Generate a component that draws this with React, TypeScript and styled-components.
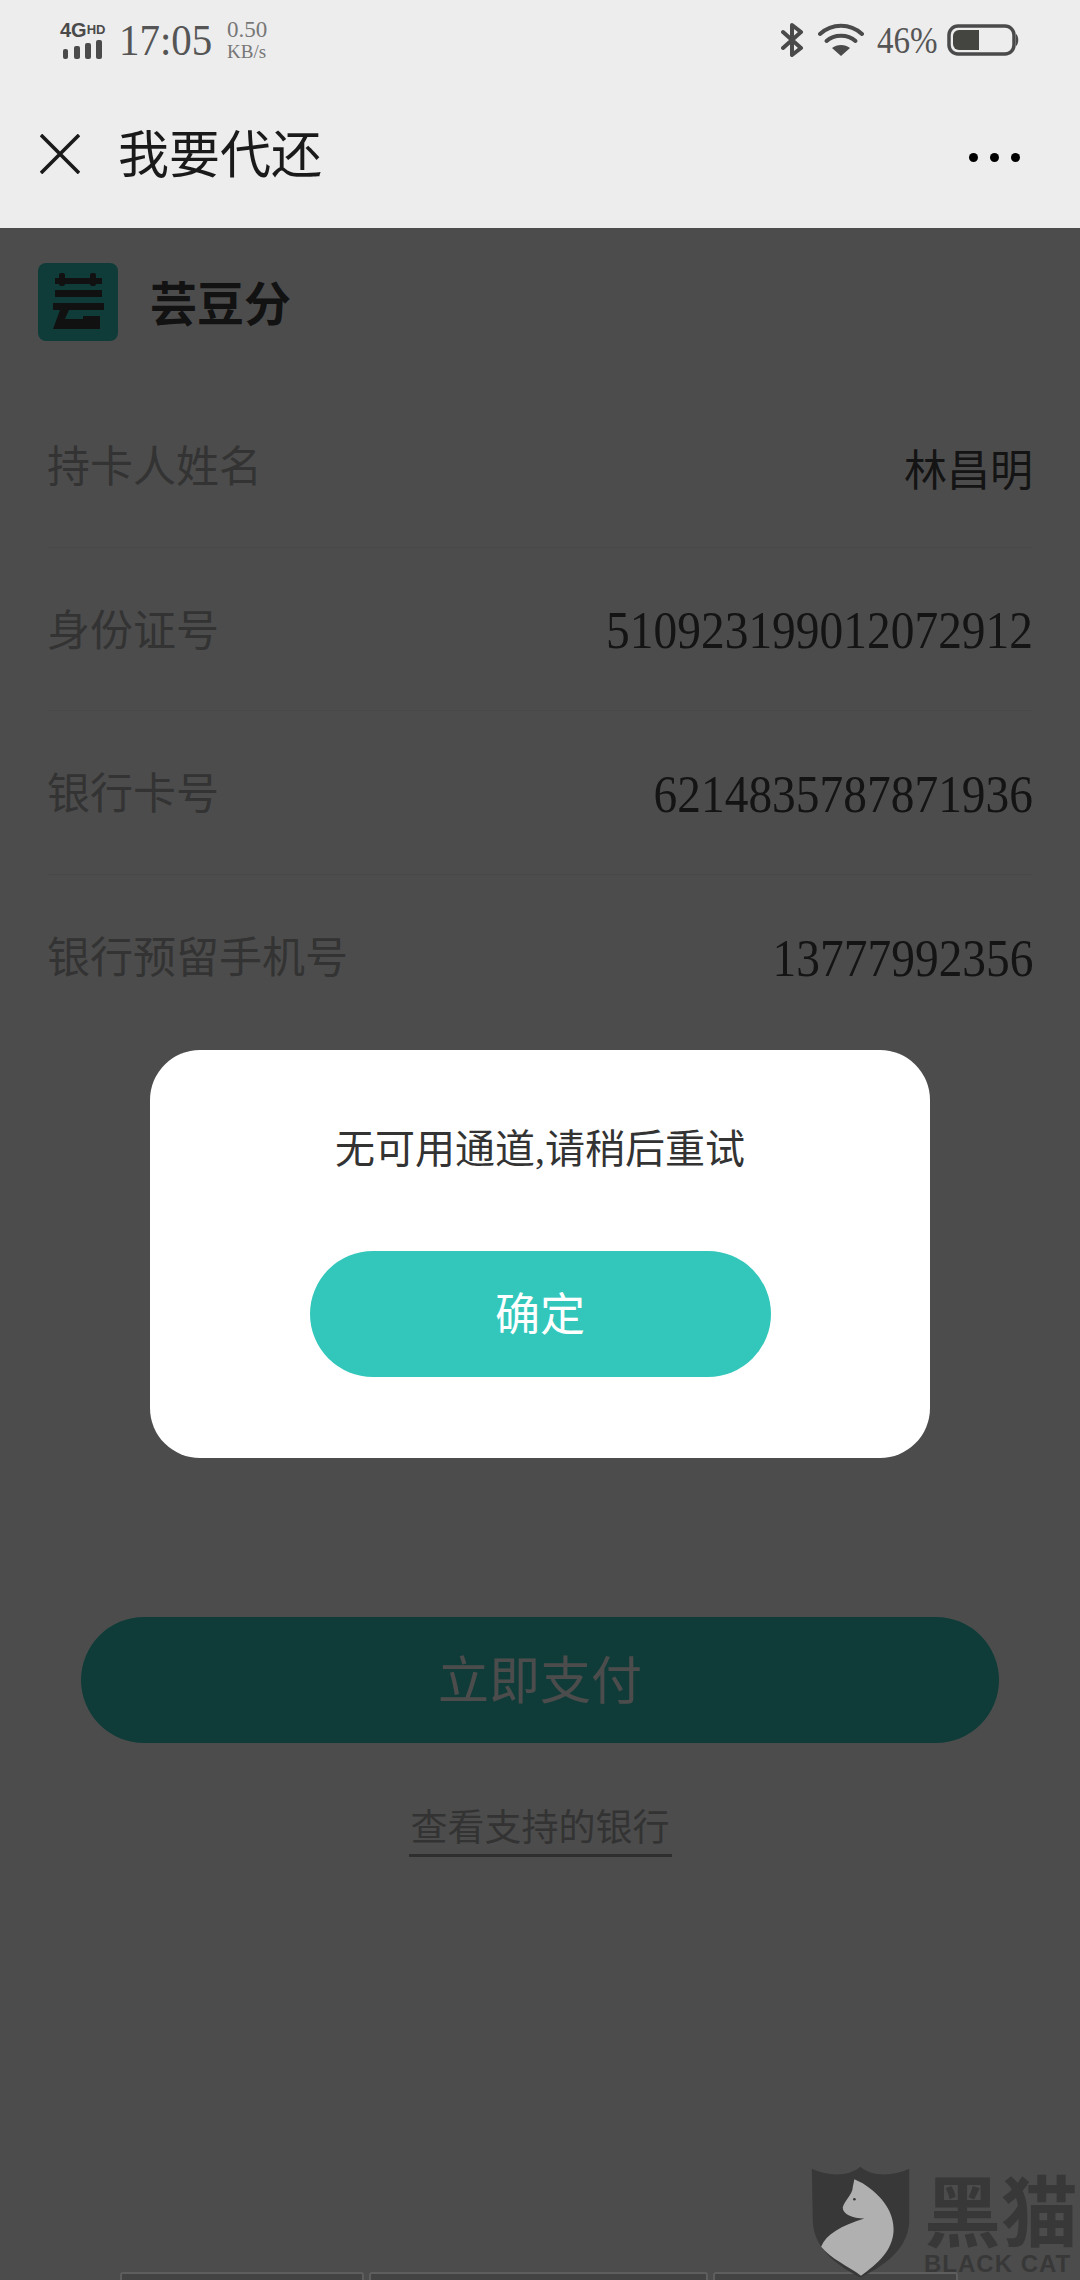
import styled, { createGlobalStyle } from "styled-components";

const SERIF = `"Liberation Serif", "Noto Sans CJK SC", serif`;
const SANS = `"Noto Sans CJK SC", "Noto Sans", sans-serif`;

const rows = [
  { label: "持卡人姓名", value: "林昌明", digits: false },
  { label: "身份证号", value: "510923199012072912", digits: true },
  { label: "银行卡号", value: "6214835787871936", digits: true },
  { label: "银行预留手机号", value: "13777992356", digits: true },
];

const App = () => {
  return (
    <S.Page>
      <GlobalStyle />
      <S.Top>
        <S.StatusBar>
          <S.StatusGroup>
            <S.Signal>
              <S.SignalText>
                4G<small>HD</small>
              </S.SignalText>
              <svg width="44" height="20" viewBox="0 0 42 20" fill="#4a4a4a">
                <rect x="2" y="10" width="5" height="10" rx="2" />
                <rect x="13" y="7" width="6" height="13" rx="2" />
                <rect x="24" y="4" width="6" height="16" rx="2" />
                <rect x="35" y="1" width="6" height="19" rx="2" />
              </svg>
            </S.Signal>
            <S.Time>17:05</S.Time>
            <S.Speed>
              <span>0.50</span>
              <small>KB/s</small>
            </S.Speed>
          </S.StatusGroup>
          <S.StatusGroup>
            <svg width="24" height="36" viewBox="0 0 24 36" fill="none" stroke="#4a4a4a" strokeWidth="4" strokeLinejoin="round" strokeLinecap="round">
              <path d="M2 10 L20 26 L11 33 V3 L20 10 L2 26" />
            </svg>
            <svg width="46" height="34" viewBox="0 0 46 34" fill="none" stroke="#4a4a4a" strokeWidth="4" strokeLinecap="round">
              <path d="M2 11 C14 0 32 0 44 11" />
              <path d="M8.5 18 C16 11 30 11 37.5 18" />
              <path d="M23 33 L14 25 C19 21 27 21 32 25 Z" fill="#4a4a4a" stroke="none" />
            </svg>
            <S.Battery>46%</S.Battery>
            <svg width="73" height="32" viewBox="0 0 73 32">
              <rect x="2" y="2" width="65" height="28" rx="9" fill="none" stroke="#4a4a4a" strokeWidth="3.5" />
              <path d="M6 12 a6 6 0 0 1 6 -6 H32 V26 H12 a6 6 0 0 1 -6 -6 Z" fill="#444440" />
              <path d="M69 10 C72 12 72 20 69 22 Z" fill="#4a4a4a" />
            </svg>
          </S.StatusGroup>
        </S.StatusBar>
        <S.NavBar>
          <svg width="40" height="40" viewBox="0 0 42 42" stroke="#1a1a1a" strokeWidth="3.8">
            <path d="M1 1 L41 41 M41 1 L1 41" />
          </svg>
          <S.NavTitle>我要代还</S.NavTitle>
          <S.Dots>
            <i />
            <i />
            <i />
          </S.Dots>
        </S.NavBar>
      </S.Top>

      <S.Content>
        <S.Brand>
          <svg width="80" height="78" viewBox="0 0 80 78">
            <rect width="80" height="78" rx="8" fill="#33c7bb" />
            <g fill="#3a3a3a">
              <rect x="17" y="15" width="47" height="6" />
              <rect x="21" y="10" width="6" height="13" rx="2" />
              <rect x="52" y="10" width="6" height="13" rx="2" />
              <rect x="17" y="27" width="47" height="7" />
              <rect x="15" y="40" width="51" height="7" />
              <path d="M22 47 H31 L27 56 H45 V53 H62 V66 H15 Z" />
            </g>
          </svg>
          <S.BrandName>芸豆分</S.BrandName>
        </S.Brand>

        <S.Form>
          {rows.map((row) => (
            <S.Row key={row.label}>
              <S.Label>{row.label}</S.Label>
              <S.Value $digits={row.digits}>{row.value}</S.Value>
            </S.Row>
          ))}
        </S.Form>

        <S.PayButton>立即支付</S.PayButton>
        <S.BankLink>查看支持的银行</S.BankLink>

        <S.Overlay>
          <S.Modal>
            <S.ModalText>无可用通道,请稍后重试</S.ModalText>
            <S.ConfirmButton>确定</S.ConfirmButton>
          </S.Modal>
        </S.Overlay>
      </S.Content>

      <S.BottomTabs>
        <S.BottomTab $width={244} />
        <S.BottomTab $width={339} />
        <S.BottomTab $width={245} />
      </S.BottomTabs>

      <S.Watermark>
        <svg width="100" height="113" viewBox="0 0 300 340">
          <path d="M2 8 C50 30 110 34 148 2 C186 34 246 30 295 8 L295 170 C290 240 240 290 148 336 C60 290 10 240 5 170 Z" fill="#383838" />
          <path
            d="M130 40 L155 52 C215 90 250 140 248 195 C245 255 200 295 150 330 C110 300 60 280 30 243 C45 205 90 180 160 158 C125 158 95 145 95 125 C100 105 125 85 125 65 Z"
            fill="#b0b0b0"
          />
          <circle cx="130" cy="100" r="4" fill="#383838" />
        </svg>
        <S.MarkText>
          <S.MarkTitle>黑猫</S.MarkTitle>
          <S.MarkSub>BLACK CAT</S.MarkSub>
        </S.MarkText>
      </S.Watermark>
    </S.Page>
  );
};

const GlobalStyle = createGlobalStyle`
  html, body {
    margin: 0;
    padding: 0;
    background: #4c4c4c;
  }
`;

const S = {
  Page: styled.div`
    position: relative;
    display: flex;
    flex-direction: column;

    width: 1080px;
    height: 2280px;
    overflow: hidden;

    font-family: ${SERIF};
  `,

  Top: styled.header`
    height: 228px;
    background-color: #ededed;
  `,

  StatusBar: styled.div`
    display: flex;
    justify-content: space-between;
    align-items: center;

    height: 80px;
    padding: 0 60px 0 60px;
  `,

  StatusGroup: styled.div`
    display: flex;
    align-items: center;
    gap: 13px;
  `,

  Signal: styled.div`
    display: flex;
    flex-direction: column;
    gap: 1px;

    width: 46px;
  `,

  SignalText: styled.div`
    font-family: "Liberation Sans", sans-serif;
    font-size: 20px;
    font-weight: 700;
    line-height: 16px;
    color: #4a4a4a;

    small {
      font-size: 13px;
      vertical-align: 3px;
    }
  `,

  Time: styled.div`
    width: 92px;
    margin-right: 3px;

    font-size: 45px;
    line-height: 50px;
    color: #555;

    transform: scaleX(0.91);
    transform-origin: left center;
  `,

  Speed: styled.div`
    display: flex;
    flex-direction: column;

    font-size: 23px;
    line-height: 24px;
    color: #777;

    small {
      font-size: 19px;
      line-height: 20px;
    }
  `,

  Battery: styled.div`
    width: 57px;

    font-size: 38px;
    color: #555;
    white-space: nowrap;

    transform: scaleX(0.87);
    transform-origin: left center;
  `,

  NavBar: styled.nav`
    display: flex;
    align-items: center;

    height: 148px;
    padding: 0 60px 14px 40px;
  `,

  NavTitle: styled.h1`
    flex: 1;
    margin: 0 0 6px 38px;

    font-size: 51px;
    font-weight: 400;
    color: #1a1a1a;
  `,

  Dots: styled.div`
    display: flex;
    gap: 12px;
    margin-top: 6px;

    i {
      width: 9px;
      height: 9px;
      border-radius: 50%;
      background-color: #000;
    }
  `,

  Content: styled.main`
    position: relative;
    flex: 1;
    display: flex;
    flex-direction: column;
    align-items: center;

    background-color: #fff;
  `,

  Brand: styled.div`
    display: flex;
    align-items: center;
    gap: 32px;

    align-self: stretch;
    padding: 35px 0 0 38px;
  `,

  BrandName: styled.div`
    margin-bottom: 3px;

    font-family: ${SANS};
    font-size: 47px;
    font-weight: 700;
    color: #3e3e3e;
  `,

  Form: styled.div`
    align-self: stretch;
    margin: 43px 47px 0;
  `,

  Row: styled.div`
    display: flex;
    justify-content: space-between;
    align-items: center;

    box-sizing: border-box;
    height: 163.5px;
    border-bottom: 1px solid #f0f0f0;

    &:last-child {
      border-bottom: none;
    }
  `,

  Label: styled.div`
    padding-bottom: 4px;

    font-size: 43px;
    color: #aaa;
  `,

  Value: styled.div<{ $digits: boolean }>`
    padding-top: 3px;

    font-size: ${({ $digits }) => ($digits ? "53px" : "43px")};
    color: #444;

    transform: scaleX(${({ $digits }) => ($digits ? 0.895 : 1)});
    transform-origin: right center;
  `,

  PayButton: styled.button`
    width: 918px;
    height: 126px;
    margin-top: 579px;
    padding-bottom: 8px;

    border: 0;
    border-radius: 63px;
    background-color: #33c7bb;

    font-family: ${SERIF};
    font-size: 51px;
    color: #fff;
  `,

  BankLink: styled.a`
    margin-top: 61px;
    padding: 0 2px;
    border-bottom: 3px solid #999;

    font-size: 37px;
    line-height: 50px;
    color: #aaa;
  `,

  Overlay: styled.div`
    position: absolute;
    inset: 0;
    display: flex;
    justify-content: center;
    align-items: center;

    background-color: rgba(0, 0, 0, 0.7);
  `,

  Modal: styled.div`
    display: flex;
    flex-direction: column;
    align-items: center;

    box-sizing: border-box;
    width: 780px;
    height: 408px;
    padding-top: 71px;

    border-radius: 50px;
    background-color: #fff;
  `,

  ModalText: styled.div`
    font-size: 40px;
    line-height: 58px;
    color: #333;
  `,

  ConfirmButton: styled.button`
    width: 461px;
    height: 126px;
    margin-top: 72px;
    padding-bottom: 7px;

    border: 0;
    border-radius: 63px;
    background-color: #33c7bb;

    font-family: ${SERIF};
    font-size: 45px;
    color: #fff;
  `,

  BottomTabs: styled.div`
    position: absolute;
    left: 120px;
    bottom: 0;
    display: flex;
    gap: 5px;
  `,

  BottomTab: styled.div<{ $width: number }>`
    box-sizing: border-box;
    width: ${({ $width }) => $width}px;
    height: 8px;

    border: 2px solid #5e5e5e;
    border-bottom: 0;
    border-radius: 3px 3px 0 0;
    background-color: #434343;
  `,

  Watermark: styled.div`
    position: absolute;
    right: 0;
    bottom: 3px;
    display: flex;
    align-items: flex-start;
    gap: 13px;

    width: 269px;
    height: 111px;
  `,

  MarkText: styled.div`
    display: flex;
    flex-direction: column;
    color: #383838;
    white-space: nowrap;
  `,

  MarkTitle: styled.div`
    height: 84px;

    font-family: ${SANS};
    font-size: 77px;
    font-weight: 700;
    line-height: 84px;
  `,

  MarkSub: styled.div`
    margin-top: 3px;

    font-family: "Liberation Sans", sans-serif;
    font-size: 24px;
    font-weight: 700;
    line-height: 22px;
    letter-spacing: 1px;
  `,
};

export default App;
